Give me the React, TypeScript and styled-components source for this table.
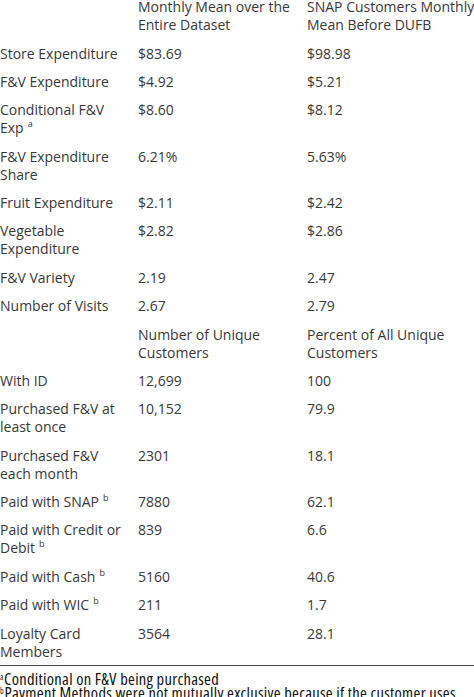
import React from 'react';
import styled, { createGlobalStyle } from 'styled-components';

const GlobalStyle = createGlobalStyle`
  html, body {
    margin: 0;
    padding: 0;
    background: #ffffff;
  }

  body {
    width: 474px;
    height: 697px;
    overflow: hidden;
    font-family: 'Open Sans', 'DejaVu Sans', sans-serif;
  }
`;

interface Row {
  label: React.ReactNode;
  first: React.ReactNode;
  second: React.ReactNode;
}

const Sup = styled.sup`
  font-size: 9px;
  line-height: 0;
  vertical-align: 6px;
  margin-left: 4px;
`;

const lines = (...parts: string[]) =>
  parts.map((p, i) => (
    <React.Fragment key={i}>
      {i > 0 && <br />}
      {p}
    </React.Fragment>
  ));

const topRows: Row[] = [
  { label: 'Store Expenditure', first: '$83.69', second: '$98.98' },
  { label: 'F&V Expenditure', first: '$4.92', second: '$5.21' },
  {
    label: (
      <>
        Conditional F&amp;V
        <br />
        Exp<Sup>a</Sup>
      </>
    ),
    first: '$8.60',
    second: '$8.12'
  },
  { label: lines('F&V Expenditure', 'Share'), first: '6.21%', second: '5.63%' },
  { label: 'Fruit Expenditure', first: '$2.11', second: '$2.42' },
  { label: lines('Vegetable', 'Expenditure'), first: '$2.82', second: '$2.86' },
  { label: 'F&V Variety', first: '2.19', second: '2.47' },
  { label: 'Number of Visits', first: '2.67', second: '2.79' }
];

const bottomRows: Row[] = [
  { label: 'With ID', first: '12,699', second: '100' },
  { label: lines('Purchased F&V at', 'least once'), first: '10,152', second: '79.9' },
  { label: lines('Purchased F&V', 'each month'), first: '2301', second: '18.1' },
  { label: <>Paid with SNAP<Sup>b</Sup></>, first: '7880', second: '62.1' },
  {
    label: (
      <>
        Paid with Credit or
        <br />
        Debit<Sup>b</Sup>
      </>
    ),
    first: '839',
    second: '6.6'
  },
  { label: <>Paid with Cash<Sup>b</Sup></>, first: '5160', second: '40.6' },
  { label: <>Paid with WIC<Sup>b</Sup></>, first: '211', second: '1.7' },
  { label: lines('Loyalty Card', 'Members'), first: '3564', second: '28.1' }
];

const Table = styled.div`
  margin-top: -7px;
  color: #383838;
  font-size: 14px;
  line-height: 18px;
`;

const TableRow = styled.div`
  display: grid;
  grid-template-columns: 138px 169px 1fr;
  padding: 5.2px 0;
`;

const Cell = styled.div`
  white-space: nowrap;
`;

const Rule = styled.hr`
  margin: -1px 0 0;
  border: 0;
  border-top: 1px solid #4a4a4a;
`;

const Notes = styled.div`
  padding-top: 6px;
  color: #111111;
  font-size: 16.5px;
  line-height: 14px;
  font-weight: 500;
  font-stretch: 86%;
  letter-spacing: 0.3px;
`;

const Note = styled.div`
  white-space: nowrap;
`;

const NoteMark = styled.sup`
  font-size: 8px;
  line-height: 0;
  vertical-align: 5px;
  margin-right: 0.5px;
`;

function DataRow ({ row }: { row: Row }): React.ReactElement {
  return (
    <TableRow>
      <Cell>{row.label}</Cell>
      <Cell>{row.first}</Cell>
      <Cell>{row.second}</Cell>
    </TableRow>
  );
}

function App (): React.ReactElement {
  return (
    <>
      <GlobalStyle />
      <Table>
        <TableRow>
          <Cell />
          <Cell>{lines('Monthly Mean over the', 'Entire Dataset')}</Cell>
          <Cell>{lines('SNAP Customers Monthly', 'Mean Before DUFB')}</Cell>
        </TableRow>
        {topRows.map((row, i) => <DataRow key={`t${i}`} row={row} />)}
        <TableRow>
          <Cell />
          <Cell>{lines('Number of Unique', 'Customers')}</Cell>
          <Cell>{lines('Percent of All Unique', 'Customers')}</Cell>
        </TableRow>
        {bottomRows.map((row, i) => <DataRow key={`b${i}`} row={row} />)}
      </Table>
      <Rule />
      <Notes>
        <Note><NoteMark>a</NoteMark>Conditional on F&amp;V being purchased</Note>
        <Note><NoteMark>b</NoteMark>Payment Methods were not mutually exclusive because if the customer uses</Note>
      </Notes>
    </>
  );
}

export default App;
